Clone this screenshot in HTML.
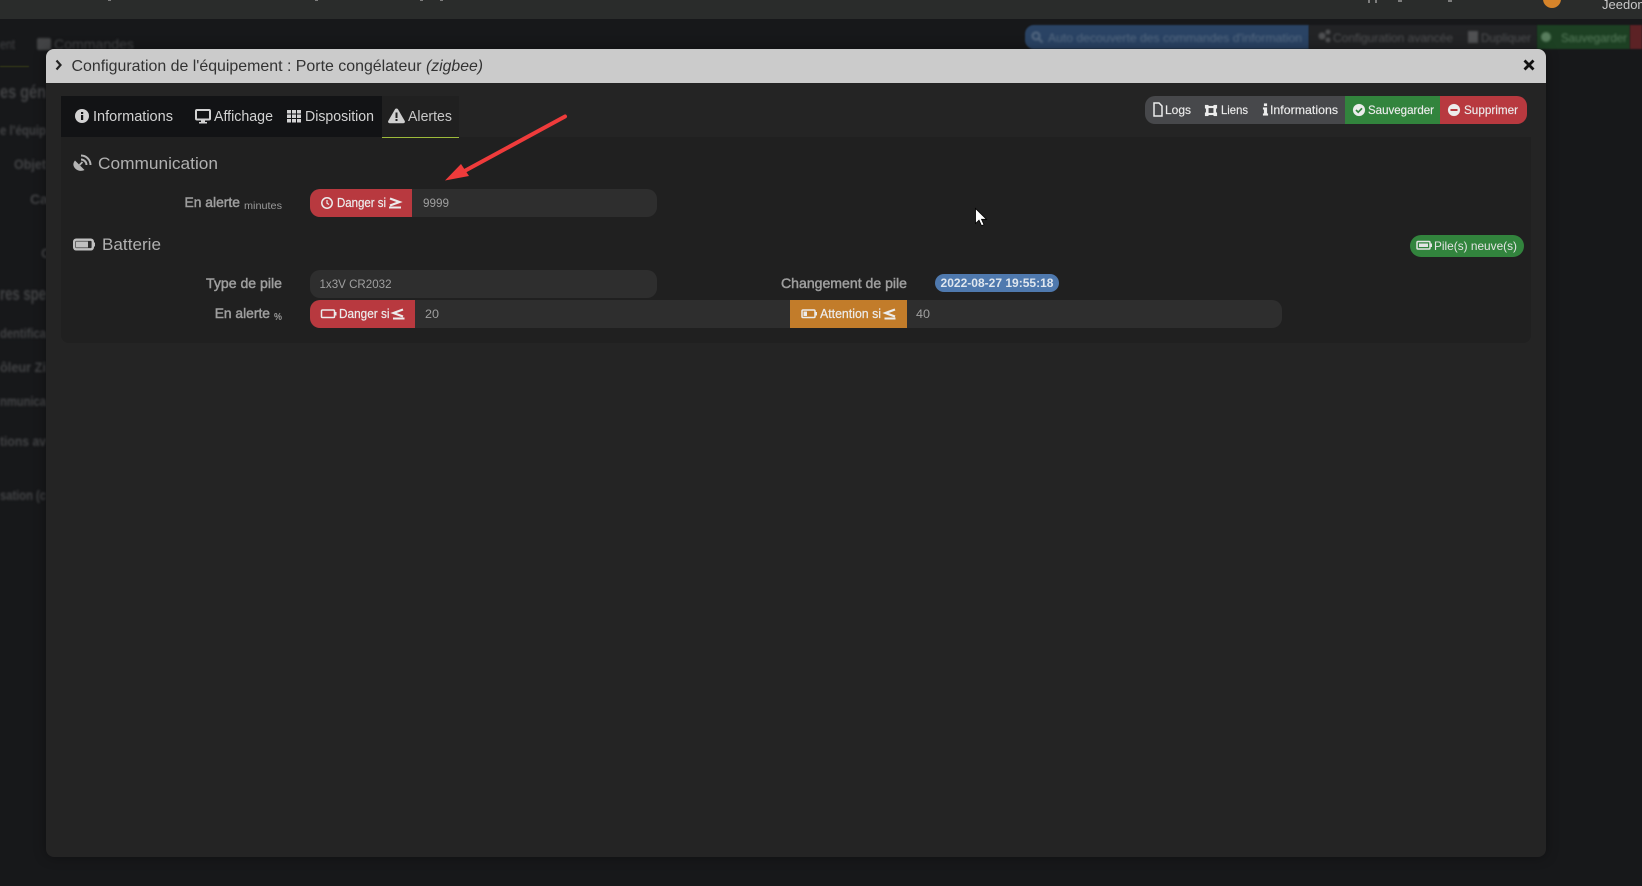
<!DOCTYPE html>
<html lang="fr"><head><meta charset="utf-8"><title>Configuration de l'équipement</title>
<style>
html,body{margin:0;padding:0;width:1642px;height:886px;overflow:hidden;background:#17181a}
div{position:absolute;box-sizing:border-box}
svg{position:absolute;left:0;top:0}
text{font-family:"Liberation Sans",sans-serif}
</style></head><body>
<div style="left:0;top:0;width:1642px;height:19px;background:#2a2c2b"></div>
<div style="left:1025px;top:25px;width:284px;height:24px;background:#2a4364;border-radius:9px 0 0 9px;filter:blur(.8px)"></div>
<div style="left:1309px;top:25px;width:228px;height:24px;background:#222325;filter:blur(.8px)"></div>
<div style="left:1537px;top:25px;width:93px;height:24px;background:#1d4023;filter:blur(.8px)"></div>
<div style="left:1630px;top:25px;width:12px;height:24px;background:#5c2225;filter:blur(.8px)"></div>
<div style="left:0;top:66px;width:29px;height:1px;background:#3b4018;filter:blur(.5px)"></div>
<svg width="1642" height="886" style="filter:blur(1px)">
<g fill="#434446" font-size="14">
<text x="0" y="49" textLength="15" lengthAdjust="spacingAndGlyphs">ent</text>
<rect x="37" y="38" width="14" height="12" rx="2"/>
<text x="54" y="49" textLength="80" lengthAdjust="spacingAndGlyphs">Commandes</text>
<text x="0" y="98" font-size="18" font-weight="bold" textLength="46" lengthAdjust="spacingAndGlyphs">es gén</text>
<text x="0" y="135" font-weight="bold" textLength="46" lengthAdjust="spacingAndGlyphs">e l'équip</text>
<text x="14" y="169" font-weight="bold" textLength="32" lengthAdjust="spacingAndGlyphs">Objet</text>
<text x="30" y="204" font-weight="bold">Ca</text>
<text x="41" y="258" font-weight="bold">C</text>
<text x="0" y="300" font-size="18" font-weight="bold" textLength="46" lengthAdjust="spacingAndGlyphs">res spe</text>
<text x="0" y="338" font-weight="bold" textLength="46" lengthAdjust="spacingAndGlyphs">dentifica</text>
<text x="0" y="372" font-weight="bold" textLength="46" lengthAdjust="spacingAndGlyphs">ôleur Zi</text>
<text x="0" y="406" font-weight="bold" textLength="46" lengthAdjust="spacingAndGlyphs">nmunica</text>
<text x="0" y="446" font-weight="bold" textLength="46" lengthAdjust="spacingAndGlyphs">tions av</text>
<text x="0" y="500" font-weight="bold" textLength="46" lengthAdjust="spacingAndGlyphs">sation (c</text>
</g>
<g font-size="12">
<text x="1048" y="42" fill="#566a82" textLength="254" lengthAdjust="spacingAndGlyphs">Auto decouverte des commandes d'information</text>
<circle cx="1036" cy="36" r="3.500" fill="none" stroke="#566a82" stroke-width="2"/><path d="M1039 39l3.500 3.500" stroke="#566a82" stroke-width="2"/>
<circle cx="1322" cy="36" r="3.500" fill="#505153"/><circle cx="1328" cy="40" r="2.500" fill="#505153"/><circle cx="1328" cy="32" r="2.500" fill="#505153"/>
<text x="1333" y="42" fill="#505153" textLength="120" lengthAdjust="spacingAndGlyphs">Configuration avancée</text>
<rect x="1468" y="31" width="10" height="12" fill="#505153"/>
<text x="1481" y="42" fill="#505153" textLength="50" lengthAdjust="spacingAndGlyphs">Dupliquer</text>
<circle cx="1546" cy="37" r="5" fill="#587d5d"/>
<text x="1561" y="42" fill="#587d5d" textLength="66" lengthAdjust="spacingAndGlyphs">Sauvegarder</text>
</g>
</svg>
<svg width="1642" height="20">
<circle cx="1552" cy="-1" r="9" fill="#d6842a"/>
<text x="1602" y="9" font-size="13" fill="#c8c8c8">Jeedom</text>
<g fill="#7d7d7d"><rect x="1368" y="0" width="2" height="3"/><rect x="1375" y="0" width="2" height="3"/><rect x="1398" y="0" width="4" height="2"/><rect x="1448" y="0" width="4" height="2"/>
<rect x="108" y="0" width="3" height="1"/><rect x="315" y="0" width="3" height="1"/><rect x="420" y="0" width="3" height="1"/><rect x="440" y="0" width="3" height="1"/></g>
</svg>

<div style="left:46px;top:49px;width:1500px;height:808px;background:#242424;border-radius:8px;box-shadow:0 0 12px rgba(0,0,0,.35)"></div>
<div style="left:46px;top:49px;width:1500px;height:34px;background:#cbcbcb;border-radius:8px 8px 0 0"></div>
<div style="left:61px;top:137px;width:1470px;height:206px;background:#202020;border-radius:0 0 8px 8px"></div>
<div style="left:61px;top:96px;width:321px;height:41px;background:#121315"></div>
<div style="left:382px;top:96px;width:77px;height:42px;background:#202020;border-bottom:1px solid #9dbb3a"></div>

<div style="left:1145px;top:96px;width:200px;height:28px;background:#47484b;border-radius:10px 0 0 10px"></div>
<div style="left:1345px;top:96px;width:95px;height:28px;background:#32843d"></div>
<div style="left:1440px;top:96px;width:87px;height:28px;background:#b8393f;border-radius:0 10px 10px 0"></div>

<div style="left:310px;top:189px;width:347px;height:28px;background:#2e2e2e;border-radius:10px"></div>
<div style="left:310px;top:189px;width:102px;height:28px;background:#b8393f;border-radius:10px 0 0 10px"></div>
<div style="left:310px;top:270px;width:347px;height:28px;background:#2e2e2e;border-radius:10px"></div>
<div style="left:310px;top:300px;width:972px;height:28px;background:#2e2e2e;border-radius:10px"></div>
<div style="left:310px;top:300px;width:105px;height:28px;background:#b8393f;border-radius:10px 0 0 10px"></div>
<div style="left:790px;top:300px;width:117px;height:28px;background:#c27c2a"></div>
<div style="left:935px;top:274px;width:124px;height:18px;background:#4f79ae;border-radius:9px"></div>
<div style="left:1410px;top:235px;width:114px;height:22px;background:#32843d;border-radius:11px"></div>

<svg width="1642" height="886">
<!-- title -->
<path d="M56.500 60.500l4 4.500-4 4.500" fill="none" stroke="#222" stroke-width="2.200"/>
<text x="71.500" y="71" font-size="16" fill="#333" textLength="350" lengthAdjust="spacingAndGlyphs">Configuration de l'équipement : Porte congélateur</text>
<text x="426" y="71" font-size="16" font-style="italic" fill="#333" textLength="57" lengthAdjust="spacingAndGlyphs">(zigbee)</text>
<path d="M1524.500 60.500l9 9m0-9l-9 9" stroke="#111" stroke-width="2.800" fill="none"/>

<!-- tabs -->
<g font-size="14.500" fill="#d2d2d2">
<circle cx="82" cy="116" r="7" fill="#d2d2d2"/><rect x="81" y="115" width="2.200" height="5" fill="#121315"/><rect x="81" y="112" width="2.200" height="2" fill="#121315"/>
<text x="93" y="121" textLength="80" lengthAdjust="spacingAndGlyphs">Informations</text>
<rect x="196" y="110" width="14" height="9.500" rx="1" fill="none" stroke="#d2d2d2" stroke-width="2"/><path d="M201 120.500h4v1.500h2v1.500h-8v-1.500h2z" fill="#d2d2d2"/>
<text x="214" y="121" textLength="59" lengthAdjust="spacingAndGlyphs">Affichage</text>
<path d="M287 110h4v3.500h-4zM292 110h4v3.500h-4zM297 110h4v3.500h-4zM287 114.500h4v3.500h-4zM292 114.500h4v3.500h-4zM297 114.500h4v3.500h-4zM287 119h4v3.500h-4zM292 119h4v3.500h-4zM297 119h4v3.500h-4z"/>
<text x="305" y="121" textLength="69" lengthAdjust="spacingAndGlyphs">Disposition</text>
<path d="M396.500 108.500c.8 0 1.300.4 1.700 1.100l6.500 11.300c.6 1.100-.1 2.300-1.400 2.300h-13.600c-1.300 0-2-1.200-1.400-2.300l6.500-11.300c.4-.7.900-1.100 1.700-1.100z" fill="#cfcfcf"/><rect x="395.500" y="112.500" width="2" height="5.500" fill="#202020"/><rect x="395.500" y="119" width="2" height="2" fill="#202020"/>
<text x="408" y="121" textLength="44" lengthAdjust="spacingAndGlyphs" fill="#c8c8c8">Alertes</text>
</g>

<!-- action buttons -->
<g font-size="12" fill="#ececec" stroke="#ececec" stroke-width=".15">
<path d="M1154 103h5l3 3v10h-8z" fill="none" stroke="#ececec" stroke-width="1.500"/>
<text x="1165" y="114" textLength="26" lengthAdjust="spacingAndGlyphs">Logs</text>
<path d="M1205 105h3l1 1h4l1-1h3v3l-1 1v3l1 1v3h-3l-1-1h-4l-1 1h-3v-3l1-1v-3l-1-1z" fill="#ececec"/><rect x="1208.500" y="108" width="5" height="5" fill="#47484b"/>
<text x="1221" y="114" textLength="27" lengthAdjust="spacingAndGlyphs">Liens</text>
<rect x="1264" y="103.500" width="3" height="2.500" fill="#ececec"/><path d="M1263 107.500h4v6h1v2h-5v-2h1v-4h-1z" fill="#ececec"/>
<text x="1270" y="114" textLength="68" lengthAdjust="spacingAndGlyphs">Informations</text>
<circle cx="1359" cy="110" r="6" fill="#ececec"/><path d="M1356 110l2.200 2.200 3.800-3.900" fill="none" stroke="#32843d" stroke-width="1.700"/>
<text x="1368" y="114" textLength="66" lengthAdjust="spacingAndGlyphs">Sauvegarder</text>
<circle cx="1454" cy="110" r="6" fill="#ececec"/><rect x="1450.500" y="109" width="7" height="2" fill="#b8393f" stroke="none"/>
<text x="1464" y="114" textLength="54" lengthAdjust="spacingAndGlyphs">Supprimer</text>
</g>

<!-- Communication -->
<g fill="#b4b4b4">
<path d="M75 160.500L84.500 170C81.500 171.500 77.500 171 75.200 168.500 72.800 166 72.800 163 75 160.500z"/>
<path d="M79.500 165l3-3" stroke="#b4b4b4" stroke-width="1.800"/>
<path d="M81 155.500A9.500 9.500 0 0 1 90.500 165M81 159.500A5.500 5.500 0 0 1 86.500 165" fill="none" stroke="#b4b4b4" stroke-width="2"/>
</g>
<text x="98" y="169" font-size="16.500" fill="#b0b0b0" textLength="120" lengthAdjust="spacingAndGlyphs">Communication</text>

<!-- Batterie -->
<rect x="74.200" y="239.700" width="18.600" height="9.600" rx="2" fill="#2a2a2a" stroke="#c0c0c0" stroke-width="2.400"/><rect x="76" y="241.500" width="12" height="6" fill="#c0c0c0"/><rect x="93" y="242.500" width="2" height="4" fill="#c0c0c0"/>
<text x="102" y="250" font-size="16.500" fill="#b0b0b0" textLength="59" lengthAdjust="spacingAndGlyphs">Batterie</text>

<!-- labels -->
<g font-size="14" fill="#9f9f9f" stroke="#9f9f9f" stroke-width=".45">
<text x="184.500" y="207" textLength="55.500" lengthAdjust="spacingAndGlyphs">En alerte</text>
<text x="206" y="288" textLength="76" lengthAdjust="spacingAndGlyphs">Type de pile</text>
<text x="781" y="288" textLength="126" lengthAdjust="spacingAndGlyphs">Changement de pile</text>
<text x="214.700" y="318" textLength="55.300" lengthAdjust="spacingAndGlyphs">En alerte</text>
</g>
<g font-size="10.500" fill="#9a9a9a">
<text x="244" y="209" textLength="38" lengthAdjust="spacingAndGlyphs">minutes</text>
<text x="274" y="320" textLength="8" lengthAdjust="spacingAndGlyphs" font-weight="bold">%</text>
</g>

<!-- Danger row -->
<circle cx="327" cy="203" r="5.200" fill="none" stroke="#ececec" stroke-width="1.500"/><path d="M327 200v3.200l2 1.300" fill="none" stroke="#ececec" stroke-width="1.200"/>
<g font-size="12.500" fill="#ececec" stroke="#ececec" stroke-width=".2">
<text x="337" y="207" textLength="49" lengthAdjust="spacingAndGlyphs">Danger si</text>
<text x="339" y="318" textLength="50.500" lengthAdjust="spacingAndGlyphs">Danger si</text>
<text x="820" y="318" textLength="61" lengthAdjust="spacingAndGlyphs">Attention si</text>
</g>
<path d="M390 198.500l9.500 3.500-9.500 3.500" fill="none" stroke="#ececec" stroke-width="2.200"/><rect x="389" y="206.500" width="12" height="2" fill="#ececec"/>
<path d="M403 309.500l-9.500 3.500 9.500 3.500" fill="none" stroke="#ececec" stroke-width="2.200"/><rect x="393" y="317.500" width="11.500" height="2" fill="#ececec"/>
<path d="M895 309.500l-9.500 3.500 9.500 3.500" fill="none" stroke="#ececec" stroke-width="2.200"/><rect x="884.500" y="317.500" width="11" height="2" fill="#ececec"/>
<rect x="321.500" y="310" width="13" height="7.500" rx="1" fill="none" stroke="#ececec" stroke-width="1.500"/><rect x="335" y="312" width="1.500" height="3.500" fill="#ececec"/>
<rect x="802" y="310" width="13" height="7.500" rx="1" fill="none" stroke="#ececec" stroke-width="1.500"/><rect x="803.500" y="311.500" width="3.500" height="4.500" fill="#ececec"/><rect x="815.500" y="312" width="1.500" height="3.500" fill="#ececec"/>

<!-- values -->
<g font-size="12" fill="#9f9f9f">
<text x="423" y="207" textLength="26" lengthAdjust="spacingAndGlyphs">9999</text>
<text x="319.500" y="288" textLength="72" lengthAdjust="spacingAndGlyphs">1x3V CR2032</text>
<text x="425" y="318" textLength="14" lengthAdjust="spacingAndGlyphs">20</text>
<text x="916" y="318" textLength="14" lengthAdjust="spacingAndGlyphs">40</text>
</g>

<!-- badges -->
<text x="940.500" y="287" font-size="12" font-weight="bold" fill="#dfe6ee" textLength="113" lengthAdjust="spacingAndGlyphs">2022-08-27 19:55:18</text>
<rect x="1417" y="241.500" width="13" height="7.500" rx="1" fill="none" stroke="#e4e4e4" stroke-width="1.500"/><rect x="1419" y="243.500" width="9" height="3.500" fill="#e4e4e4"/><rect x="1430.500" y="243.500" width="1.500" height="3.500" fill="#e4e4e4"/>
<text x="1434" y="250" font-size="12" fill="#e4e4e4" textLength="83" lengthAdjust="spacingAndGlyphs">Pile(s) neuve(s)</text>

<!-- red arrow -->
<path d="M565 116.500L459 174" stroke="#ef3b3b" stroke-width="4" stroke-linecap="round" fill="none"/>
<path d="M445 180.500L461 164 469 176z" fill="#ef3b3b"/>

<!-- cursor -->
<path d="M975.500 208.500v15l3.500-3.300 2.500 5.500 2.500-1.100-2.500-5.300h5z" fill="#fff" stroke="#000" stroke-width=".8"/>
</svg>
</body></html>
